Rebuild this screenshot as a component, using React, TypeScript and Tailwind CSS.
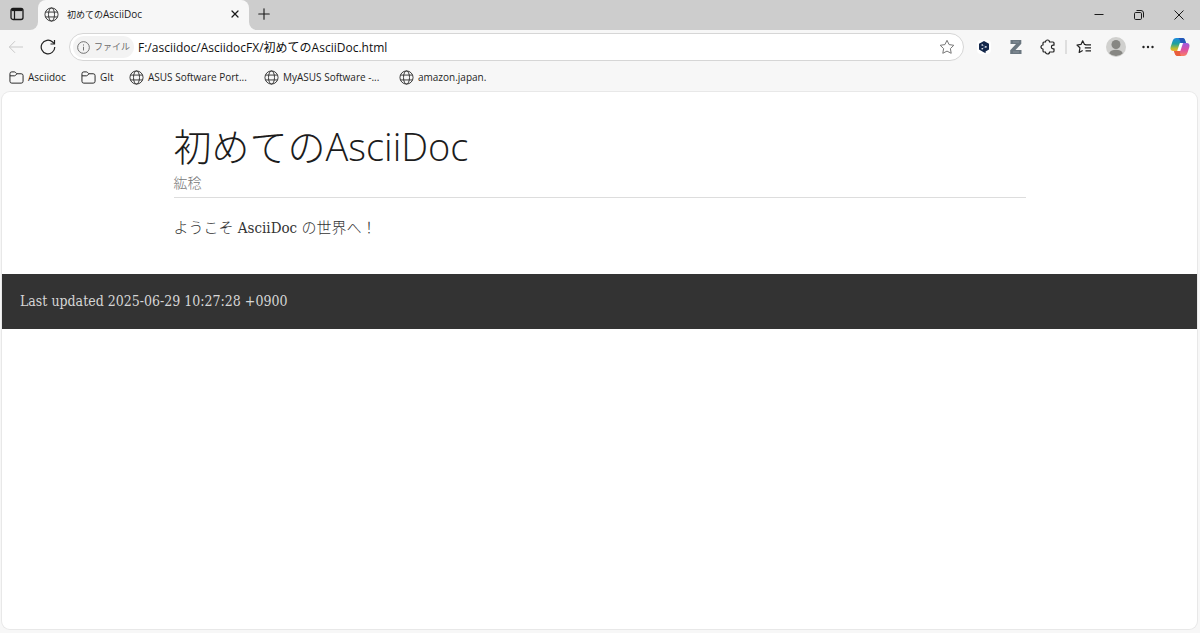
import type { ReactNode } from "react";
import { Plus, X } from "lucide-react";

const GlobeIcon = () => (
  <svg viewBox="0 0 16 16" fill="none" stroke="currentColor" className="size-[15px] text-[#333]" aria-hidden="true">
    <circle cx="8" cy="8" r="7" />
    <ellipse cx="8" cy="8" rx="3.2" ry="7" />
    <path d="M1.6 5.4h12.8M1.6 10.6h12.8" />
  </svg>
);

const FolderIcon = () => (
  <svg viewBox="0 0 16 16" fill="none" stroke="currentColor" className="size-[15px]" aria-hidden="true">
    <path d="M1 4a2 2 0 0 1 2-2h2.7c.5 0 .9.2 1.2.5L8.4 4H13a2 2 0 0 1 2 2v6a2 2 0 0 1-2 2H3a2 2 0 0 1-2-2zM1 6.2h4.8c.5 0 .9-.2 1.2-.5L8.4 4" />
  </svg>
);

const TabActionsIcon = () => (
  <svg viewBox="0 0 14 14" fill="none" stroke="currentColor" className="size-[14px]" aria-hidden="true">
    <rect x="1" y="1.5" width="12" height="11" rx="2" strokeWidth="1.3" />
    <path d="M1.5 2.8h11" strokeWidth="2.6" />
    <path d="M4.5 4v8.500" strokeWidth="1.2" />
  </svg>
);

const BackIcon = () => (
  <svg viewBox="0 0 16 16" fill="none" stroke="currentColor" className="size-4" aria-hidden="true">
    <path d="M15 8H1.5M7 2.2 1.3 8 7 13.800" />
  </svg>
);

const RefreshIcon = () => (
  <svg viewBox="0 0 16 16" fill="none" stroke="currentColor" strokeWidth="1.2" className="size-4" aria-hidden="true">
    <path d="M14.8 8A6.8 6.8 0 1 1 12.6 3l1.7 1.700" />
    <path d="M14.5 1v4h-4" />
  </svg>
);

const InfoIcon = () => (
  <svg viewBox="0 0 14 14" fill="none" stroke="currentColor" className="size-[13px]" aria-hidden="true">
    <circle cx="7" cy="7" r="6.3" />
    <path d="M7 6.2v4M7 3.7v1.200" />
  </svg>
);

const StarIcon = () => (
  <svg viewBox="0 0 16 16" fill="none" stroke="currentColor" strokeLinejoin="round" className="size-4" aria-hidden="true">
    <path d="m8 1.3 2.1 4.3 4.7.7-3.4 3.3.8 4.7L8 12.1l-4.2 2.2.8-4.7-3.4-3.3 4.7-.7z" />
  </svg>
);

const HexagonIcon = () => (
  <svg viewBox="0 0 14 14" className="size-[14px] rounded-sm bg-white" aria-hidden="true">
    <path d="M7 1 12 3.800v5.700L8.600 11.400v1.900L6.300 12 2 9.500V3.800z" fill="#14284b" />
    <path d="M5.300 5 8.800 6.900 5.300 8.700" fill="none" stroke="#8fa3c4" strokeWidth=".5" />
    <circle cx="5.2" cy="5" r=".8" fill="#fff" />
    <circle cx="8.9" cy="6.9" r=".8" fill="#fff" />
    <circle cx="5.2" cy="8.7" r=".8" fill="#fff" />
  </svg>
);

const ZigzagIcon = () => (
  <svg viewBox="0 0 12 14" className="h-[14px] w-3" aria-hidden="true">
    <path d="M.5 0h10.800v3.800L5.500 10h6V14H.2V10.200L6 4H.5z" fill="#6b7780" />
    <path d="M3 2h6M3 12h6" stroke="#98a2a9" strokeWidth=".7" />
  </svg>
);

const PuzzleIcon = () => (
  <svg viewBox="0 0 16 16" fill="none" stroke="currentColor" strokeWidth="1.2" strokeLinejoin="round" className="size-4" aria-hidden="true">
    <path d="M5.500 3A2 2 0 0 1 9.500 3H13a1 1 0 0 1 1 1v2.200h-.8a1.800 1.800 0 0 0 0 3.600h.8V12a1 1 0 0 1-1 1H9.500a2 2 0 0 1-4 0H4a1 1 0 0 1-1-1v-2a2 2 0 0 1 0-4V4a1 1 0 0 1 1-1z" />
  </svg>
);

const FavoritesIcon = () => (
  <svg viewBox="0 0 16 16" fill="none" stroke="currentColor" strokeWidth="1.2" strokeLinejoin="round" className="size-4" aria-hidden="true">
    <path d="M10 5.600 8.500 5.400 6.700 1.800 5 5.400l-4 .6 2.900 2.800-.7 4.700 3.500-2" />
    <path d="M9.500 5.800H15M8.800 8.800H15M9.500 11.800H15" />
  </svg>
);

const ProfileIcon = () => (
  <svg viewBox="0 0 20 20" className="size-5" aria-hidden="true">
    <circle cx="10" cy="10" r="10" fill="#d0d0ce" />
    <circle cx="10" cy="7.500" r="4.500" fill="#878783" />
    <path d="M3.200 16.200C4.300 13.800 7 12.800 10 12.800s5.700 1 6.800 3.400A9.500 9.500 0 0 1 10 19a9.500 9.500 0 0 1-6.800-2.800z" fill="#878783" />
  </svg>
);

const MoreIcon = () => (
  <svg viewBox="0 0 14 4" fill="currentColor" className="h-1 w-[14px]" aria-hidden="true">
    <circle cx="2.500" cy="2" r="1.200" />
    <circle cx="7" cy="2" r="1.200" />
    <circle cx="11.500" cy="2" r="1.200" />
  </svg>
);

const CopilotIcon = () => (
  <svg viewBox="0 0 20 20" className="size-5" aria-hidden="true">
    <defs>
      <linearGradient id="copilot-left" x1="0" y1="0" x2="0" y2="1">
        <stop offset="0" stopColor="#1c8be0" />
        <stop offset=".45" stopColor="#20a29b" />
        <stop offset=".8" stopColor="#b7bd32" />
        <stop offset="1" stopColor="#efb02e" />
      </linearGradient>
      <linearGradient id="copilot-right" x1="0" y1="0" x2="0" y2="1">
        <stop offset="0" stopColor="#9a5be0" />
        <stop offset=".5" stopColor="#dc4fa5" />
        <stop offset="1" stopColor="#fa8064" />
      </linearGradient>
    </defs>
    <path d="M6.500 1h6.200c1.200 0 1.900.8 2.300 1.900L16 6h-2.500c-1.500 0-2.300.7-2.700 2L9.400 12.500C9 13.700 8.300 14 7.200 14H3.500C.8 14 0 12.200.7 9.700L2.600 4C3.300 2 4.300 1 6.500 1z" fill="url(#copilot-left)" />
    <path d="M11 1h1.700c1.200 0 1.900.8 2.300 1.900L16 6h-2.500c-1.200 0-1.900.4-2.400 1.200L9.700 3C9.400 2 8.900 1.300 8 1z" fill="#2456b8" />
    <path d="M13.500 19H7.300c-1.200 0-1.900-.8-2.300-1.900L4 14h3.200c1.500 0 2.300-.7 2.700-2l1.300-4c.4-1.300 1.100-2 2.300-2h3c2.700 0 3.500 1.800 2.800 4.300L17.400 16c-.7 2-1.700 3-3.900 3z" fill="url(#copilot-right)" />
    <path d="M4 14h3.200c1.200 0 1.900-.4 2.400-1.200L10.200 17c.2 1 .5 1.700 1.300 2H7.300c-1.200 0-1.900-.8-2.300-1.900z" fill="#e95f3c" />
    <path d="M9.800 6h3.200L10.400 14H7.200z" fill="#fff" />
  </svg>
);

const IconButton = ({ label, children, className = "w-8 text-[#222]" }: { label: string; children: ReactNode; className?: string }) => (
  <button type="button" aria-label={label} className={`flex h-7 shrink-0 items-center justify-center ${className}`}>
    {children}
  </button>
);

const TitleBar = () => (
  <div className="flex h-[30px] bg-[#f7f7f7] text-[#1b1b1b]">
    <div className="flex w-[38px] shrink-0 justify-center rounded-br-lg bg-[#cdcdcd] pr-1">
      <IconButton label="タブ操作メニュー" className="w-8">
        <TabActionsIcon />
      </IconButton>
    </div>
    <div className="w-[211px] shrink-0 bg-[#cdcdcd]">
      <div className="flex h-full items-center rounded-t-lg bg-[#f7f7f7] pr-1 pb-[2px] pl-[6px]">
        <GlobeIcon />
        <span className="flex-1 pl-2 text-[10px]">
          <span className="text-[9px]">初めての</span>AsciiDoc
        </span>
        <button type="button" aria-label="タブを閉じる" className="flex size-5 items-center justify-center">
          <X size={12} strokeWidth={2.5} />
        </button>
      </div>
    </div>
    <div className="flex flex-1 justify-between rounded-bl-lg bg-[#cdcdcd]">
      <IconButton label="新しいタブ" className="w-[30px]">
        <Plus size={18} strokeWidth={1.5} />
      </IconButton>
      <div className="flex pt-px pr-px">
        <IconButton label="最小化" className="w-10">
          <svg viewBox="0 0 10 10" stroke="currentColor" className="size-[10px]" aria-hidden="true">
            <path d="M.5 4.500h9" />
          </svg>
        </IconButton>
        <IconButton label="元に戻す" className="w-10">
          <svg viewBox="0 0 10 10" fill="none" stroke="currentColor" className="size-[10px]" aria-hidden="true">
            <rect x=".5" y="2.500" width="7" height="7" rx="1.200" />
            <path d="M2.500.5H7A2.500 2.500 0 0 1 9.500 3v4.500" />
          </svg>
        </IconButton>
        <IconButton label="閉じる" className="w-10">
          <svg viewBox="0 0 10 10" stroke="currentColor" className="size-[10px]" aria-hidden="true">
            <path d="m.5.5 9 9M9.500.5l-9 9" />
          </svg>
        </IconButton>
      </div>
    </div>
  </div>
);

const Toolbar = () => (
  <div className="flex h-[34px] items-center pr-1">
    <IconButton label="戻る" className="w-8 text-[#c9c9c9]">
      <BackIcon />
    </IconButton>
    <IconButton label="更新" className="w-8 text-[#222]">
      <RefreshIcon />
    </IconButton>
    <div className="mr-1 ml-[5px] flex h-7 flex-1 items-center rounded-full border border-[#d6d6d6] bg-white pl-[3px]">
      <button type="button" className="flex h-[22px] shrink-0 items-center gap-1 rounded-full bg-[#f3f3f3] px-1 text-[#6a6a6a]">
        <InfoIcon />
        <span className="text-[9px] whitespace-nowrap">ファイル</span>
      </button>
      <input
        type="text"
        aria-label="アドレスバー"
        defaultValue="F:/asciidoc/AsciidocFX/初めてのAsciiDoc.html"
        className="ml-1 h-6 min-w-0 flex-1 bg-transparent text-[12px] text-[#111] outline-none"
      />
      <IconButton label="お気に入りに追加" className="w-8 text-[#777]">
        <StarIcon />
      </IconButton>
    </div>
    <IconButton label="翻訳">
      <HexagonIcon />
    </IconButton>
    <IconButton label="Zotero">
      <ZigzagIcon />
    </IconButton>
    <IconButton label="拡張機能">
      <PuzzleIcon />
    </IconButton>
    <div className="mx-px h-[14px] w-[2px] shrink-0 bg-[#dedede]" />
    <IconButton label="お気に入り">
      <FavoritesIcon />
    </IconButton>
    <IconButton label="プロファイル">
      <ProfileIcon />
    </IconButton>
    <IconButton label="設定など">
      <MoreIcon />
    </IconButton>
    <IconButton label="Copilot">
      <CopilotIcon />
    </IconButton>
  </div>
);

const BookmarksBar = () => (
  <nav aria-label="お気に入りバー" className="flex h-7 items-center pb-[2px] pl-[9px] text-[10px] whitespace-nowrap text-[#1f1f1f]">
    <a href="#asciidoc" className="flex w-[72px] items-center gap-1">
      <FolderIcon />
      Asciidoc
    </a>
    <a href="#git" className="flex w-12 items-center gap-1">
      <FolderIcon />
      GIt
    </a>
    <a href="#asus" className="flex w-[135px] items-center gap-1">
      <GlobeIcon />
      ASUS Software Port...
    </a>
    <a href="#myasus" className="flex w-[135px] items-center gap-1">
      <GlobeIcon />
      MyASUS Software -...
    </a>
    <a href="#amazon" className="flex items-center gap-1">
      <GlobeIcon />
      amazon.japan.
    </a>
  </nav>
);

const DocumentPage = () => (
  <main className="mr-[3px] mb-1 ml-[2px] flex-1 overflow-hidden rounded-lg bg-white font-['DejaVu_Serif_Condensed','DejaVu_Serif','Noto_Sans_CJK_JP',serif] ring-1 ring-[#e8e8e8]">
    <header className="mx-auto max-w-[852px] border-b border-[#dddddd] pt-[27px]">
      <h1 className="font-['Open_Sans','Noto_Sans_CJK_JP',sans-serif] text-[38px] leading-[54px] font-light text-[#1c1c1c]">
        初めてのAsciiDoc
      </h1>
      <p className="pb-1 text-[14px] leading-5 font-light text-[#777]">紘稔</p>
    </header>
    <p className="mx-auto max-w-[852px] pt-[18px] pb-[34px] text-[15px] leading-6 font-light text-[#333]">
      ようこそ AsciiDoc の世界へ！
    </p>
    <footer className="bg-[#333] px-[18px] py-4 text-[14px] leading-[23px] text-[#d6d6d6]">
      Last updated 2025-06-29 10:27:28 +0900
    </footer>
  </main>
);

export default function App() {
  return (
    <div className="flex min-h-screen flex-col bg-[#f7f7f7] font-['Open_Sans','Noto_Sans_CJK_JP',sans-serif]">
      <TitleBar />
      <Toolbar />
      <BookmarksBar />
      <DocumentPage />
    </div>
  );
}
